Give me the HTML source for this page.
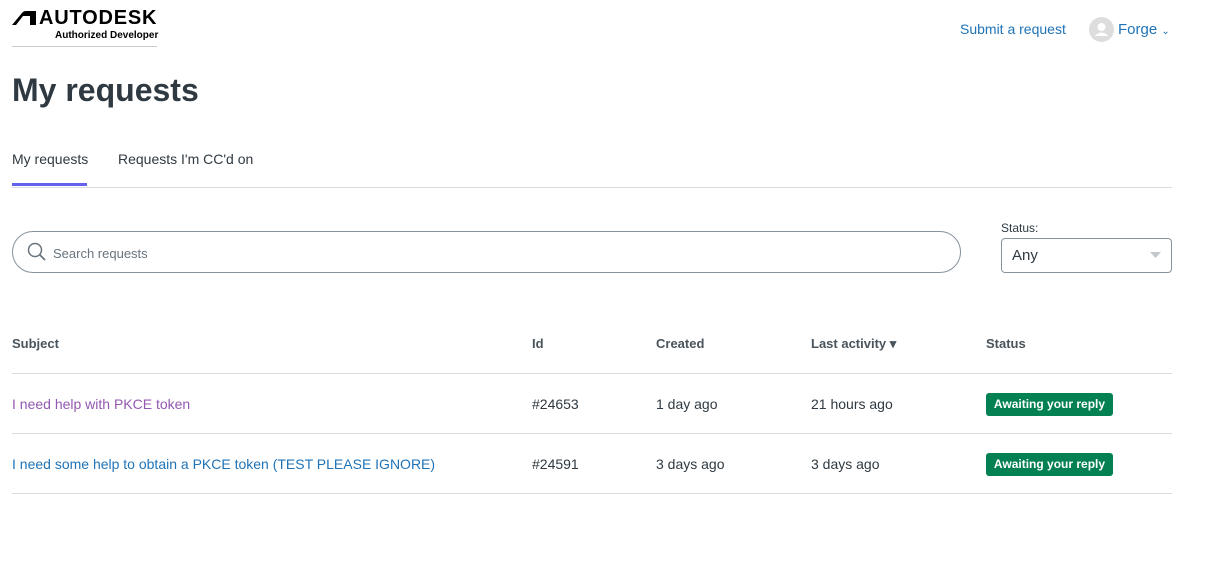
<!DOCTYPE html>
<html><head><meta charset="utf-8"><style>
*{margin:0;padding:0;box-sizing:border-box}
body{width:1232px;height:570px;background:#fff;font-family:"Liberation Sans",sans-serif;color:#2f3941;position:relative;overflow:hidden}
.a{position:absolute;white-space:nowrap}
.th{font-size:13px;font-weight:bold;color:#49545c;top:336px}
.td{font-size:14px;color:#2f3941}
.hr{position:absolute;left:12px;width:1160px;height:1px;background:#d8dcde}
.badge{position:absolute;left:986px;width:127px;height:23px;background:#038153;color:#fff;font-size:12px;font-weight:bold;border-radius:3px;text-align:center;line-height:23px}
</style></head><body>
<svg class="a" style="left:12px;top:11px" width="24" height="14" viewBox="0 0 24 14"><path d="M0 14 L10 2 Q11.5 0 14 0 L24 0 L24 14 L18 14 L18 5 L11 5 L4 14 Z" fill="#000"/></svg>
<div class="a" style="left:39px;top:7px;font-size:20px;font-weight:bold;color:#000;letter-spacing:0.8px">AUTODESK</div>
<div class="a" style="left:55px;top:30px;font-size:10px;font-weight:bold;color:#000">Authorized Developer</div>
<div class="a" style="left:12px;top:46px;width:145px;height:1px;background:#ccc"></div>
<div class="a" style="left:960px;top:21px;font-size:14px;color:#1f73b7">Submit a request</div>
<svg class="a" style="left:1089px;top:17px" width="25" height="25" viewBox="0 0 25 25"><circle cx="12.5" cy="12.5" r="12.5" fill="#ddd"/><circle cx="12.5" cy="10" r="4" fill="#fff"/><path d="M5.5 19 Q12.5 12 19.5 19 Z" fill="#fff"/></svg>
<div class="a" style="left:1118px;top:21px;font-size:15px;color:#1f73b7">Forge <span style="font-size:10px">⌄</span></div>
<div class="a" style="left:12px;top:72px;font-size:32px;font-weight:bold;color:#2f3941">My requests</div>
<div class="a" style="left:12px;top:151px;font-size:14px">My requests</div>
<div class="a" style="left:12px;top:183px;width:75px;height:3px;background:#6262ec"></div>
<div class="a" style="left:118px;top:151px;font-size:14px">Requests I'm CC'd on</div>
<div class="hr" style="top:187px"></div>
<div class="a" style="left:12px;top:231px;width:949px;height:42px;border:1px solid #87929d;border-radius:21px"></div>
<svg class="a" style="left:27px;top:242px" width="20" height="20" viewBox="0 0 20 20"><circle cx="8" cy="8" r="6.5" fill="none" stroke="#68737d" stroke-width="1.5"/><path d="M13 13 L18 18" stroke="#68737d" stroke-width="1.8"/></svg>
<div class="a" style="left:53px;top:246px;font-size:13px;color:#68737d">Search requests</div>
<div class="a" style="left:1001px;top:221px;font-size:12px">Status:</div>
<div class="a" style="left:1001px;top:238px;width:171px;height:35px;border:1px solid #87929d;border-radius:4px"></div>
<div class="a" style="left:1012px;top:247px;font-size:15px">Any</div>
<svg class="a" style="left:1150px;top:252px" width="11" height="7"><path d="M0 0 L11 0 L5.5 6 Z" fill="#c2c8cc"/></svg>
<div class="a th" style="left:12px">Subject</div>
<div class="a th" style="left:532px">Id</div>
<div class="a th" style="left:656px">Created</div>
<div class="a th" style="left:811px">Last activity ▾</div>
<div class="a th" style="left:986px">Status</div>
<div class="hr" style="top:373px"></div>
<div class="a td" style="left:12px;top:396px;color:#9358b0">I need help with PKCE token</div>
<div class="a td" style="left:532px;top:396px">#24653</div>
<div class="a td" style="left:656px;top:396px">1 day ago</div>
<div class="a td" style="left:811px;top:396px">21 hours ago</div>
<div class="badge" style="top:393px">Awaiting your reply</div>
<div class="hr" style="top:433px"></div>
<div class="a td" style="left:12px;top:456px;color:#1f73b7">I need some help to obtain a PKCE token (TEST PLEASE IGNORE)</div>
<div class="a td" style="left:532px;top:456px">#24591</div>
<div class="a td" style="left:656px;top:456px">3 days ago</div>
<div class="a td" style="left:811px;top:456px">3 days ago</div>
<div class="badge" style="top:453px">Awaiting your reply</div>
<div class="hr" style="top:493px"></div>
</body></html>
